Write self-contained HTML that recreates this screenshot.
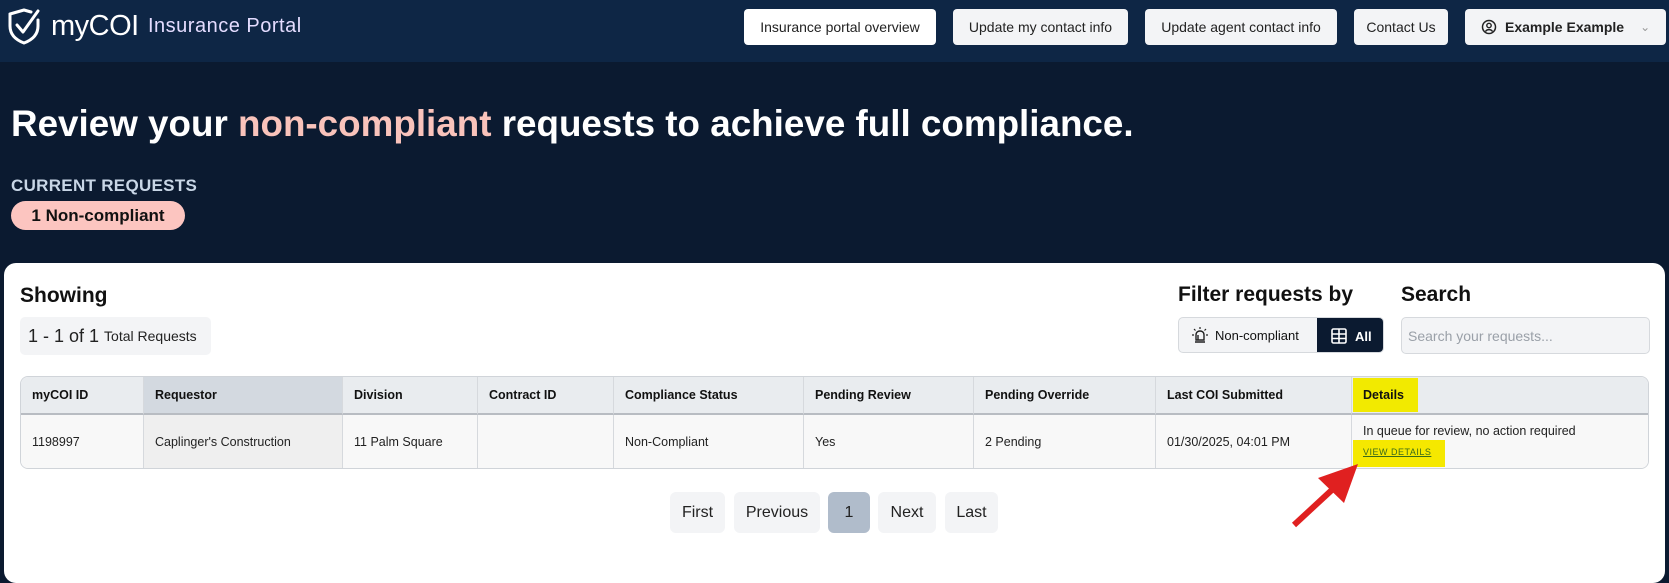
<!DOCTYPE html>
<html><head><meta charset="utf-8"><style>
*{box-sizing:border-box;margin:0;padding:0}
body{width:1669px;height:561px;overflow:hidden;background:#0b1a30;font-family:"Liberation Sans",sans-serif;position:relative;color:#111}
.hdr{position:absolute;left:0;top:0;width:1669px;height:62px;background:#0e2645}
.a{position:absolute}
.btn{position:absolute;top:9px;height:36px;background:#f3f4f6;border-radius:4px;font-size:14px;color:#222;display:flex;align-items:center;justify-content:center}
.card{position:absolute;left:4px;top:263px;width:1661px;height:320px;background:#fff;border-radius:12px}
table{position:absolute;left:20px;top:376px;width:1629px;border-collapse:separate;border-spacing:0;border:1px solid #d0d4d9;border-radius:8px;overflow:hidden;font-size:12.5px;table-layout:fixed}
th{background:#e9ecef;height:38px;text-align:left;padding-left:11px;font-weight:bold;border-bottom:2px solid #b8bcc2;border-right:1px solid #d6d9dd}
td{background:#f8f8f8;height:53px;padding-left:11px;border-right:1px solid #d6d9dd;color:#222}
th:last-child,td:last-child{border-right:none}
.pg{position:absolute;top:492px;height:41px;background:#f3f4f6;border-radius:6px;font-size:16px;display:flex;align-items:center;justify-content:center;color:#222}
</style></head><body>
<div class="hdr"></div>
<svg class="a" style="left:7px;top:8px" width="34" height="38" viewBox="0 0 34 38"><path d="M3 6 L17 2 L24 4 M3 6 V18 C3 27 9 32 17 35 C25 32 31 27 31 18 V12" fill="none" stroke="#fff" stroke-width="3" stroke-linecap="round" stroke-linejoin="round"/><path d="M10 17 L16 24 L31 3" fill="none" stroke="#fff" stroke-width="3" stroke-linecap="round" stroke-linejoin="round"/></svg>
<div class="a" style="left:51px;top:10px;font-size:29px;color:#fff;letter-spacing:-0.5px">myCOI</div>
<div class="a" style="left:148px;top:15px;font-size:20px;color:#e4dcff;letter-spacing:0.5px">Insurance Portal</div>
<div class="btn" style="left:744px;width:192px;background:#fff">Insurance portal overview</div>
<div class="btn" style="left:953px;width:175px">Update my contact info</div>
<div class="btn" style="left:1145px;width:192px">Update agent contact info</div>
<div class="btn" style="left:1354px;width:94px">Contact Us</div>
<div class="btn" style="left:1465px;width:201px;justify-content:flex-start;padding-left:16px;font-weight:bold;height:36px"><svg width="16" height="16" viewBox="0 0 16 16" style="margin-right:8px"><circle cx="8" cy="8" r="6.5" fill="none" stroke="#222" stroke-width="1.5"/><circle cx="8" cy="6.5" r="2.2" fill="none" stroke="#222" stroke-width="1.4"/><path d="M4.5 12.5 C6 10 10 10 11.5 12.5" fill="none" stroke="#222" stroke-width="1.4"/></svg>Example Example<span style="margin-left:16px;color:#999;font-weight:normal;font-size:12px">&#8964;</span></div>
<div class="a" style="left:11px;top:103px;font-size:36.8px;font-weight:bold;color:#fff;white-space:nowrap">Review your <span style="color:#f9c3bb">non-compliant</span> requests to achieve full compliance.</div>
<div class="a" style="left:11px;top:176px;font-size:17px;font-weight:bold;color:#c8d6e6;letter-spacing:0.3px">CURRENT REQUESTS</div>
<div class="a" style="left:11px;top:201px;width:174px;height:29px;background:#fcc5c0;border-radius:15px;font-size:17px;font-weight:bold;color:#111;display:flex;align-items:center;justify-content:center">1 Non-compliant</div>
<div class="card"></div>
<div class="a" style="left:20px;top:284px;font-size:21px;font-weight:bold">Showing</div>
<div class="a" style="left:20px;top:317px;width:191px;height:38px;background:#f3f4f6;border-radius:5px;display:flex;align-items:center;padding-left:8px;font-size:18px;color:#222">1 - 1 of 1&nbsp;<span style="font-size:14px">Total Requests</span></div>
<div class="a" style="left:1178px;top:283px;font-size:21px;font-weight:bold">Filter requests by</div>
<div class="a" style="left:1178px;top:317px;width:206px;height:36px;border:1px solid #d6d9dd;border-radius:5px;background:#f3f4f6;overflow:hidden">
<div class="a" style="left:12px;top:8px;font-size:13px;display:flex;align-items:center"><svg width="18" height="18" viewBox="0 0 18 18" style="margin-right:6px"><path d="M4 16 H14 M5 14 V9 C5 6 7 5 9 5 C11 5 13 6 13 9 V14 Z M7 14 V9" fill="none" stroke="#222" stroke-width="1.4"/><path d="M9 1 V3 M3 3 L4.5 4.5 M15 3 L13.5 4.5 M1 9 H3 M15 9 H17" stroke="#222" stroke-width="1.2"/></svg>Non-compliant</div>
<div class="a" style="left:138px;top:0;width:68px;height:36px;background:#0b1a30;color:#fff;font-size:13px;font-weight:bold;display:flex;align-items:center;padding-left:14px"><svg width="16" height="16" viewBox="0 0 16 16" style="margin-right:8px"><rect x="1" y="1" width="14" height="14" rx="1.5" fill="none" stroke="#fff" stroke-width="1.6"/><path d="M1 6 H15 M1 10.5 H15 M8 1 V15" stroke="#fff" stroke-width="1.6"/></svg>All</div>
</div>
<div class="a" style="left:1401px;top:283px;font-size:21px;font-weight:bold">Search</div>
<div class="a" style="left:1401px;top:317px;width:249px;height:37px;border:1px solid #d6d9dd;border-radius:5px;background:#f3f4f6;font-size:14px;color:#9aa0a8;padding:10px 6px">Search your requests...</div>
<table><colgroup><col style="width:123px"><col style="width:199px"><col style="width:135px"><col style="width:136px"><col style="width:190px"><col style="width:170px"><col style="width:182px"><col style="width:196px"><col></colgroup>
<tr><th>myCOI ID</th><th style="background:#d3d9e0">Requestor</th><th>Division</th><th>Contract ID</th><th>Compliance Status</th><th>Pending Review</th><th>Pending Override</th><th>Last COI Submitted</th><th><span style="background:#f2ea00;padding:10px 14px 10px 10px;margin-left:-10px">Details</span></th></tr>
<tr><td>1198997</td><td style="background:#efefef">Caplinger's Construction</td><td>11 Palm Square</td><td></td><td>Non-Compliant</td><td>Yes</td><td>2 Pending</td><td>01/30/2025, 04:01 PM</td><td style="vertical-align:top;padding-top:9px">In queue for review, no action required<br><span style="display:inline-block;margin-top:2px;margin-left:-10px;background:#f5e800;padding:7px 14px 10px 10px;font-size:9px;letter-spacing:0.5px;text-decoration:underline;color:#3a6b1a">VIEW DETAILS</span></td></tr>
</table>
<div class="pg" style="left:670px;width:55px">First</div>
<div class="pg" style="left:734px;width:86px">Previous</div>
<div class="pg" style="left:828px;width:42px;background:#b0bccb">1</div>
<div class="pg" style="left:878px;width:58px">Next</div>
<div class="pg" style="left:945px;width:53px">Last</div>
<svg class="a" style="left:0;top:0" width="1669" height="561"><line x1="1294" y1="525" x2="1334" y2="488" stroke="#e02020" stroke-width="6"/><polygon points="1358,464 1318,478 1344,503" fill="#e02020"/></svg>
</body></html>
